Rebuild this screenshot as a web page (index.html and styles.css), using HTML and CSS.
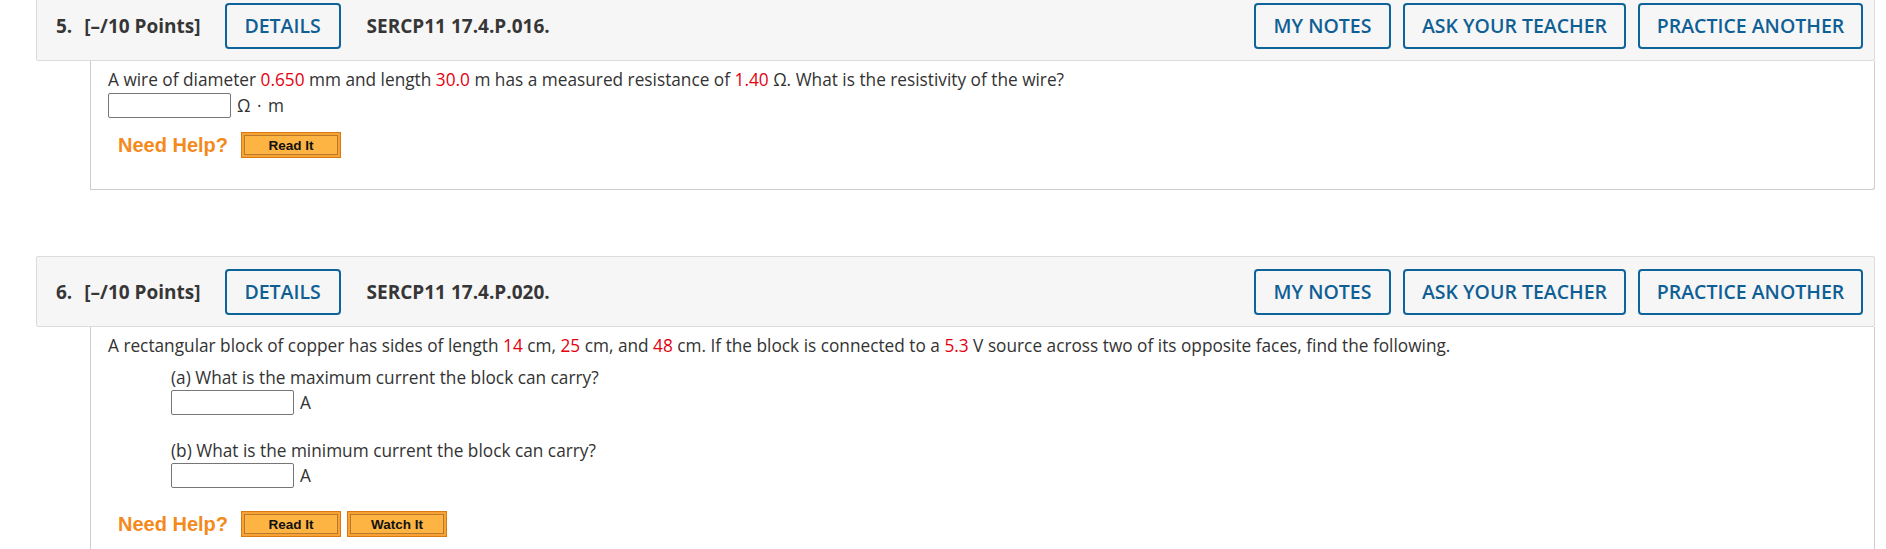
FILE: index.html
```html
<!DOCTYPE html>
<html>
<head>
<meta charset="utf-8">
<link rel="stylesheet" href="styles.css">
</head>
<body>
<div class="page">
  <section class="question">
    <div class="q-head">
      <span class="q-num">5.</span>
      <span class="q-pts">[&ndash;/10 Points]</span>
      <button class="btn btn-details">DETAILS</button>
      <span class="q-code">SERCP11 17.4.P.016.</span>
      <div class="q-actions">
        <button class="btn btn-notes">MY NOTES</button>
        <button class="btn btn-ask">ASK YOUR TEACHER</button>
        <button class="btn btn-practice">PRACTICE ANOTHER</button>
      </div>
    </div>
    <div class="q-body q-body-5">
      <p class="q-text">A wire of diameter <span class="num">0.650</span> mm and length <span class="num">30.0</span> m has a measured resistance of <span class="num">1.40</span> &Omega;. What is the resistivity of the wire?</p>
      <div class="answer"><span class="box"></span><span class="unit">&Omega; &middot; m</span></div>
      <div class="help">
        <span class="need">Need Help?</span>
        <span class="help-btn">Read It</span>
      </div>
    </div>
  </section>

  <section class="question q-second">
    <div class="q-head">
      <span class="q-num">6.</span>
      <span class="q-pts">[&ndash;/10 Points]</span>
      <button class="btn btn-details">DETAILS</button>
      <span class="q-code">SERCP11 17.4.P.020.</span>
      <div class="q-actions">
        <button class="btn btn-notes">MY NOTES</button>
        <button class="btn btn-ask">ASK YOUR TEACHER</button>
        <button class="btn btn-practice">PRACTICE ANOTHER</button>
      </div>
    </div>
    <div class="q-body">
      <p class="q-text">A rectangular block of copper has sides of length <span class="num">14</span> cm, <span class="num">25</span> cm, and <span class="num">48</span> cm. If the block is connected to a <span class="num">5.3</span> V source across two of its opposite faces, find the following.</p>
      <div class="part part-a">
        <p class="part-text">(a) What is the maximum current the block can carry?</p>
        <div class="answer"><span class="box"></span><span class="unit">A</span></div>
      </div>
      <div class="part part-b">
        <p class="part-text">(b) What is the minimum current the block can carry?</p>
        <div class="answer"><span class="box"></span><span class="unit">A</span></div>
      </div>
      <div class="help help-6">
        <span class="need">Need Help?</span>
        <span class="help-btn">Read It</span>
        <span class="help-btn">Watch It</span>
      </div>
    </div>
  </section>
</div>
</body>
</html>
```

FILE: styles.css
```css
html, body {
  margin: 0;
  padding: 0;
  background: #ffffff;
}

.page {
  margin-top: -10px;
  padding: 0 11px 0 36px;
}

.q-second {
  margin-top: 66px;
}

.q-head {
  box-sizing: border-box;
  height: 71px;
  display: flex;
  align-items: center;
  background: #f6f6f6;
  border: 1px solid #dcdcdc;
  border-radius: 2px;
  padding: 0 11px 0 19px;
  font-family: "Open Sans", "Noto Sans", sans-serif;
  font-weight: 700;
  font-size: 19px;
  color: #363636;
}

.q-num {
  margin-right: 12px;
}

.q-pts {
  margin-right: 24px;
}

.btn {
  box-sizing: border-box;
  height: 46px;
  background: transparent;
  border: 2px solid #0f639b;
  border-radius: 4px;
  color: #0f5f95;
  font-family: "Open Sans", "Noto Sans", sans-serif;
  font-weight: 600;
  font-size: 19.5px;
  padding: 0;
  text-align: center;
  cursor: pointer;
}

.btn-details {
  width: 116px;
  margin-right: 26px;
}

.q-actions {
  margin-left: auto;
  display: flex;
  gap: 12px;
}

.btn-notes { width: 137px; }
.btn-ask { width: 223px; }
.btn-practice { width: 225px; }

.q-body {
  margin-left: 54px;
  border: 1px solid #cccccc;
  border-top: none;
  border-radius: 0 0 3px 0;
  padding: 7px 17px 31px 17px;
  font-family: "Open Sans", "Noto Sans", sans-serif;
  font-size: 17.25px;
  color: #333333;
}

.q-text, .part-text {
  margin: 0;
  line-height: 24px;
}

.num {
  color: #e3000f;
}

.answer {
  display: flex;
  align-items: center;
  margin-top: 1px;
  height: 25px;
}

.part .answer {
  margin-top: 0;
}

.box {
  box-sizing: border-box;
  width: 123px;
  height: 25px;
  border: 1px solid #767676;
  border-radius: 2px;
  background: #fff;
}

.unit {
  margin-left: 6px;
  line-height: 25px;
  word-spacing: 2px;
}

.part {
  margin-left: 63px;
}

.part-a {
  margin-top: 8px;
}

.part-b {
  margin-top: 24px;
}

.help {
  display: flex;
  align-items: center;
  margin-top: 14px;
  padding-left: 10px;
  gap: 6px;
}

.help-6 {
  margin-top: 23px;
}

.need {
  font-family: "Liberation Sans", Arial, sans-serif;
  font-weight: 700;
  font-size: 20px;
  color: #f48a1c;
  margin-right: 7px;
}

.help-btn {
  box-sizing: border-box;
  width: 100px;
  height: 26px;
  display: flex;
  align-items: center;
  justify-content: center;
  background: #fdb443;
  border: 1px solid #d77a12;
  box-shadow: inset 0 0 0 2px #f7a233, inset 0 0 0 3px #b8792e;
  font-family: "Liberation Sans", Arial, sans-serif;
  font-weight: 700;
  font-size: 13.5px;
  color: #111111;
}
```
